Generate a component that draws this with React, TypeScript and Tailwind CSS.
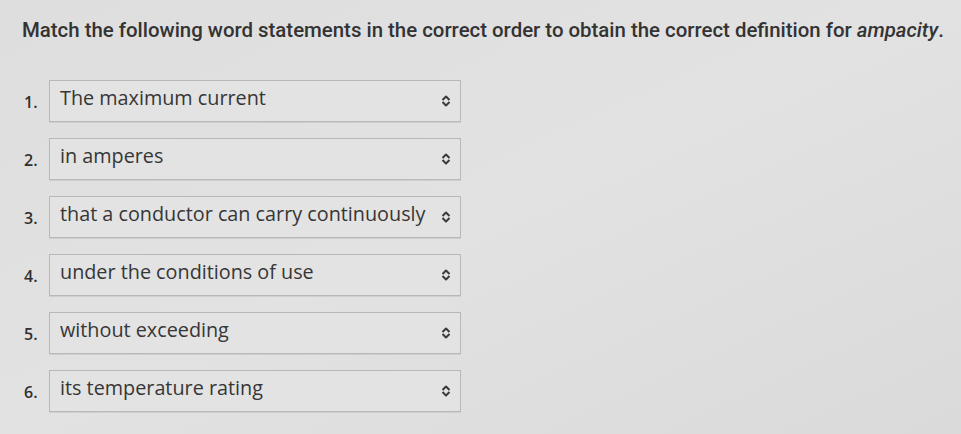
import React from "react";

const items = [
  "The maximum current",
  "in amperes",
  "that a conductor can carry continuously",
  "under the conditions of use",
  "without exceeding",
  "its temperature rating",
];

function Chevrons() {
  return (
    <svg width="12" height="14" viewBox="0 0 12 14" className="shrink-0">
      <path d="M2.5 6 L6 2.5 L9.5 6" fill="none" stroke="#3a3a3a" strokeWidth="2" strokeLinejoin="round" />
      <path d="M2.5 8 L6 11.5 L9.5 8" fill="none" stroke="#3a3a3a" strokeWidth="2" strokeLinejoin="round" />
    </svg>
  );
}

export default function App() {
  return (
    <div
      className="w-[961px] h-[434px] overflow-hidden bg-gradient-to-br from-[#dedede] via-[#e2e2e2] to-[#dadada] text-[#333]"
      style={{ fontFamily: "'Open Sans', sans-serif" }}
    >
      <div
        className="pl-[22px] pt-[16px] text-[20.4px] leading-[28px] font-medium text-[#333]"
        style={{ fontFamily: "Roboto, sans-serif" }}
      >
        Match the following word statements in the correct order to obtain the correct definition for{" "}
        <i>ampacity</i>.
      </div>
      <div className="flex flex-col gap-[16px] pl-[24px] pt-[36px]">
        {items.map((t, i) => (
          <div key={i} className="flex items-center">
            <div className="w-[25px] text-[16px] pt-[2px] font-semibold text-[#2f2f2f]">{i + 1}.</div>
            <div className="w-[412px] h-[42px] border border-[#b8b8b8] bg-[#e3e3e3] flex items-center justify-between pl-[10px] pr-[8px] shadow-[0_1px_0_#cfcfcf]">
              <span className="text-[19.8px] -mt-[6px] text-[#363636]">{t}</span>
              <Chevrons />
            </div>
          </div>
        ))}
      </div>
    </div>
  );
}
